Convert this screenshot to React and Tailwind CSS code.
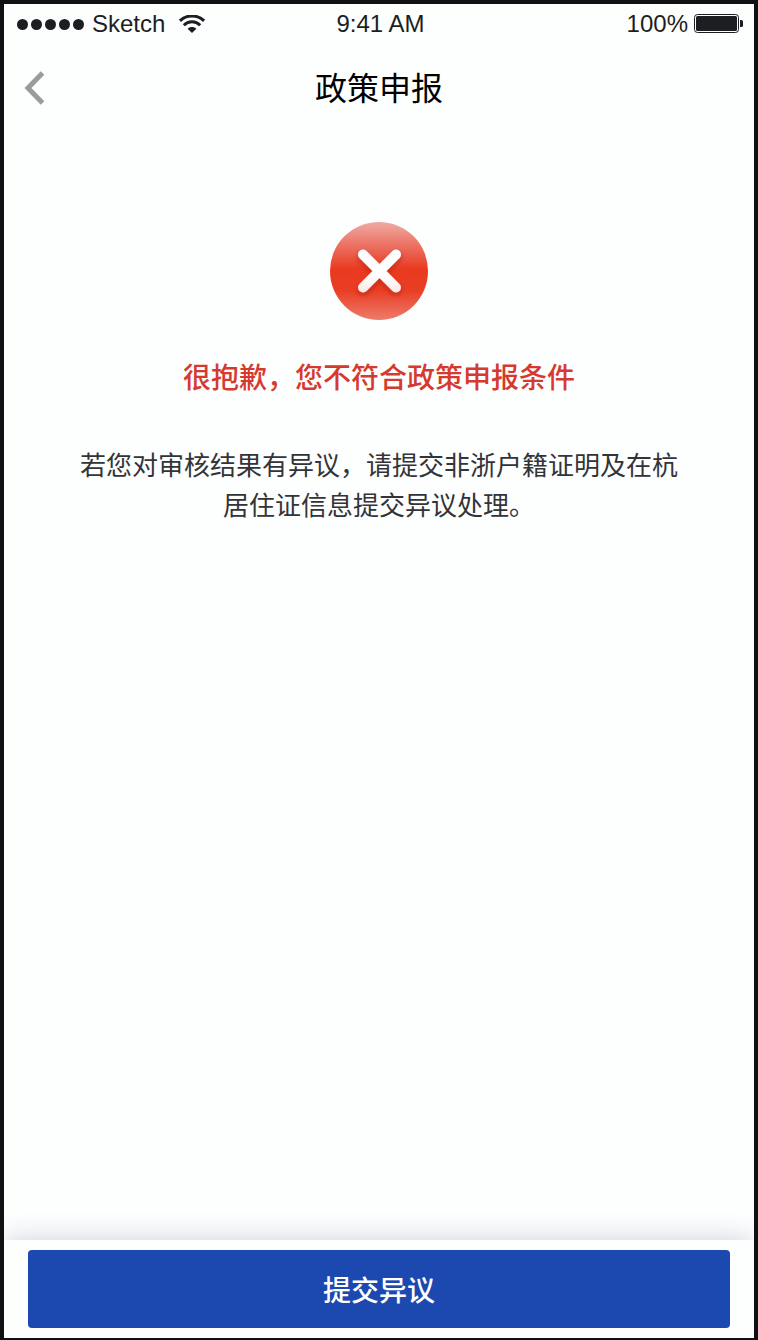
const SIGNAL_DOTS = [1, 2, 3, 4, 5];

const WifiIcon = () => (
    <svg width="26" height="18" viewBox="0 0 26 18" fill="none" aria-hidden="true">
        <path d="M0.9 5.8C7.6-0.7 18.4-0.7 25.1 5.8" stroke="#1d1e22" strokeWidth="3" />
        <path d="M4.8 10.3C9.5 5.7 16.5 5.7 21.2 10.3" stroke="#1d1e22" strokeWidth="3" />
        <path d="M8.6 13.8C11 11.3 15 11.3 17.4 13.8L13 17.9Z" fill="#1d1e22" />
    </svg>
);

const BatteryIcon = () => (
    <svg width="50" height="20" viewBox="0 0 50 20" fill="none" aria-hidden="true">
        <rect x="0.5" y="0.5" width="44" height="18" rx="3" stroke="#1d1e22" />
        <rect x="2" y="2" width="41" height="15" rx="1.5" fill="#1d1e22" />
        <path d="M46 6h1.5a1.5 1.5 0 0 1 1.5 1.5v4a1.5 1.5 0 0 1-1.5 1.5H46z" fill="#1d1e22" />
    </svg>
);

const RejectedIcon = () => (
    <svg width="98" height="98" viewBox="0 0 98 98" fill="none" aria-hidden="true">
        <defs>
            <linearGradient id="disc" x1="0" y1="0" x2="0" y2="1">
                <stop offset="0" stopColor="#f0aba4" />
                <stop offset="0.22" stopColor="#ec7668" />
                <stop offset="0.48" stopColor="#e93a20" />
                <stop offset="0.7" stopColor="#e93e24" />
                <stop offset="1" stopColor="#ee7b6b" />
            </linearGradient>
            <linearGradient id="cross" gradientUnits="userSpaceOnUse" x1="0" y1="27" x2="0" y2="71">
                <stop offset="0.6" stopColor="#ffffff" />
                <stop offset="1" stopColor="#fbe6e3" />
            </linearGradient>
            <filter id="crossShadow" x="-30%" y="-30%" width="160%" height="160%">
                <feDropShadow dx="0" dy="3" stdDeviation="2.5" floodColor="#a81804" floodOpacity="0.5" />
            </filter>
        </defs>
        <circle cx="49" cy="49" r="49" fill="url(#disc)" />
        <path d="M33 32.5L66 65.5M66 32.5L33 65.5" stroke="url(#cross)" strokeWidth="10" strokeLinecap="round" filter="url(#crossShadow)" />
    </svg>
);

const StatusBar = () => (
    <div className="grid h-10 grid-cols-[1fr_auto_1fr] items-center pl-[13px] pr-[10px] font-['Liberation_Sans',sans-serif] text-2xl text-[#1d1e22]">
        <div className="flex items-center">
            <div className="flex gap-[3px]">
                {SIGNAL_DOTS.map((dot) => (
                    <span key={dot} className="size-[11px] rounded-full bg-[#1d1e22]"></span>
                ))}
            </div>
            <span className="ml-2 mr-[14px]">Sketch</span>
            <WifiIcon />
        </div>
        <span className="text-center">9:41 AM</span>
        <div className="flex items-center justify-end gap-[6px]">
            <span>100%</span>
            <BatteryIcon />
        </div>
    </div>
);

const Header = () => (
    <header className="grid h-[88px] grid-cols-[40px_1fr_40px] items-center px-5">
        <button type="button" aria-label="返回" className="cursor-pointer">
            <svg width="22" height="34" viewBox="0 0 22 34" fill="none" aria-hidden="true">
                <path d="M18.5 2L4 17L18.5 32" stroke="#9b9b9d" strokeWidth="5" />
            </svg>
        </button>
        <h1 className="pb-1 text-center text-[32px] leading-10 text-black">政策申报</h1>
    </header>
);

const App = () => {
    return (
        <div className="flex min-h-screen flex-col border-4 border-b-2 border-[#101114] bg-[#fdfefe] font-['Noto_Sans_CJK_SC',sans-serif]" lang="zh-CN">
            <StatusBar />
            <Header />

            <main className="flex flex-1 flex-col items-center px-[72px] pt-[90px] text-center">
                <RejectedIcon />
                <h2 className="mt-9 text-[28px] leading-10 font-medium text-[#d63a2f]">
                    很抱歉，您不符合政策申报条件
                </h2>
                <p className="mt-12 text-[26px] leading-10 text-[#333438]">
                    若您对审核结果有异议，请提交非浙户籍证明及在杭居住证信息提交异议处理。
                </p>
            </main>

            <footer className="bg-[#fdfefe] px-6 py-[10px] shadow-[0_-4px_24px_-2px_rgba(40,60,90,0.2)] [clip-path:inset(-40px_0_0_0)]">
                <button type="button" className="h-[78px] w-full cursor-pointer rounded bg-[#1c49b0] text-[28px] font-medium text-white">
                    提交异议
                </button>
            </footer>
        </div>
    );
};

export default App;
